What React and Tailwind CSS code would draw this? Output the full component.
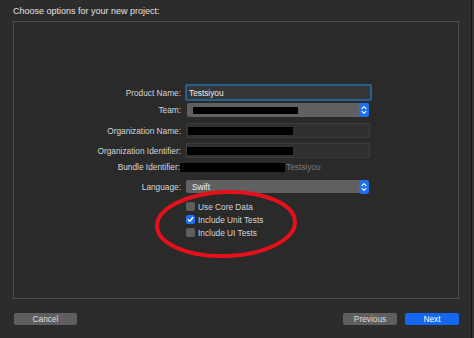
import React from "react";

const font = { fontFamily: '"Liberation Sans", Arial, sans-serif' };

function Stepper() {
  return (
    <div className="w-[10px] h-[14px] rounded-[3px] bg-[#1f6ff2] flex items-center justify-center">
      <svg width="6" height="10" viewBox="0 0 6 10" fill="none" stroke="white" strokeWidth="1.1" strokeLinecap="round" strokeLinejoin="round">
        <path d="M1 3.6 L3 1.6 L5 3.6" />
        <path d="M1 6.4 L3 8.4 L5 6.4" />
      </svg>
    </div>
  );
}

function Label({ children }) {
  return (
    <div className="w-[168px] shrink-0 text-right text-[8.3px] leading-[10px] text-[#d6d6d6] pr-[1px]">
      {children}
    </div>
  );
}

function Check({ checked, label }) {
  return (
    <div className="flex items-center h-[13px]">
      <div className="w-[168px] shrink-0" />
      <div className="ml-[4px] flex items-center">
        {checked ? (
          <div className="w-[9px] h-[9px] rounded-[2px] bg-[#1f6ff2] flex items-center justify-center">
            <svg width="7" height="7" viewBox="0 0 7 7" fill="none" stroke="white" strokeWidth="1.3" strokeLinecap="round" strokeLinejoin="round">
              <path d="M1.2 3.7 L2.8 5.3 L5.8 1.5" />
            </svg>
          </div>
        ) : (
          <div className="w-[9px] h-[9px] rounded-[2px] bg-[#5e5e5e]" />
        )}
        <span className="ml-[3px] text-[8.3px] leading-[10px] text-[#d6d6d6]">{label}</span>
      </div>
    </div>
  );
}

export default function App() {
  return (
    <div className="w-[474px] h-[338px] bg-[#2c2c2c] flex relative overflow-hidden" style={font}>
      <div className="w-[471px] h-full flex flex-col pl-[13px]">
        <div className="pt-[6px] h-[11px] box-content text-[9px] leading-[11px] text-[#e2e2e2]">
          Choose options for your new project:
        </div>
        <div className="mt-[4px] w-[446px] h-[278px] border border-[#4c4c4c] bg-[#2a2a2a] flex flex-col">
          {/* Product Name */}
          <div className="mt-[62px] h-[17px] flex items-center">
            <Label>Product Name:</Label>
            <div className="ml-[3px] w-[187px] h-[17px] rounded-[2px] border-2 border-[#22628c] bg-[#353535] flex items-center">
              <span className="ml-[2px] text-[8.3px] leading-[10px] text-[#f0f0f0]">Testsiyou</span>
            </div>
          </div>
          {/* Team */}
          <div className="mt-[2px] h-[14px] flex items-center">
            <Label>Team:</Label>
            <div className="ml-[5px] w-[182px] h-[14px] rounded-[2px] bg-[#606060] flex items-center justify-between">
              <div className="ml-[6px] w-[105px] h-[7px] bg-black" />
              <Stepper />
            </div>
          </div>
          {/* Organization Name */}
          <div className="mt-[6px] h-[15px] flex items-center">
            <Label>Organization Name:</Label>
            <div className="ml-[4px] w-[184px] h-[15px] border border-[#3c3c3c] bg-[#303030] flex items-center">
              <div className="ml-[1px] w-[105px] h-[8px] bg-black" />
            </div>
          </div>
          {/* Organization Identifier */}
          <div className="mt-[5px] h-[15px] flex items-center">
            <Label>Organization Identifier:</Label>
            <div className="ml-[4px] w-[184px] h-[15px] border border-[#3c3c3c] bg-[#303030] flex items-center">
              <div className="ml-[0px] w-[106px] h-[8px] bg-black" />
            </div>
          </div>
          {/* Bundle Identifier */}
          <div className="mt-[2px] h-[14px] flex items-center">
            <div className="w-[166px] shrink-0 text-right text-[8.3px] leading-[10px] text-[#d6d6d6]">Bundle Identifier:</div>
            <div className="w-[105px] h-[9px] bg-black" />
            <span className="ml-[1px] text-[8.3px] leading-[10px] text-[#7a7a7a]">Testsiyou</span>
          </div>
          {/* Language */}
          <div className="mt-[6px] h-[13px] flex items-center">
            <Label>Language:</Label>
            <div className="ml-[4px] w-[183px] h-[13px] rounded-[2px] bg-[#606060] flex items-center justify-between">
              <span className="ml-[6px] text-[8.3px] leading-[10px] text-[#f0f0f0]">Swift</span>
              <Stepper />
            </div>
          </div>
          {/* Checkboxes */}
          <div className="mt-[7px] flex flex-col">
            <Check label="Use Core Data" />
            <Check checked label="Include Unit Tests" />
            <Check label="Include UI Tests" />
          </div>
        </div>
        {/* Buttons */}
        <div className="mt-[14px] w-[446px] flex items-center justify-between pl-[1px]">
          <div className="w-[63px] h-[12px] rounded-[2px] bg-[#5f5f5f] flex items-center justify-center text-[8.3px] leading-[10px] text-[#dcdcdc]">
            Cancel
          </div>
          <div className="flex items-center gap-[8px]">
            <div className="w-[54px] h-[12px] rounded-[2px] bg-[#5f5f5f] flex items-center justify-center text-[8.3px] leading-[10px] text-[#dcdcdc]">
              Previous
            </div>
            <div className="w-[54px] h-[12px] rounded-[2px] bg-[#1566f0] flex items-center justify-center text-[8.3px] leading-[10px] text-white">
              Next
            </div>
          </div>
        </div>
      </div>
      <div className="w-[1px] h-full bg-[#151515]" />
      <div className="w-[2px] h-full bg-[#333333]" />
      {/* red annotation ellipse */}
      <svg className="absolute left-0 top-0 pointer-events-none" width="474" height="338" viewBox="0 0 474 338">
        <ellipse cx="226" cy="224" rx="69" ry="32" fill="none" stroke="#e5101b" strokeWidth="4" transform="rotate(-2 226 224)" />
      </svg>
    </div>
  );
}
